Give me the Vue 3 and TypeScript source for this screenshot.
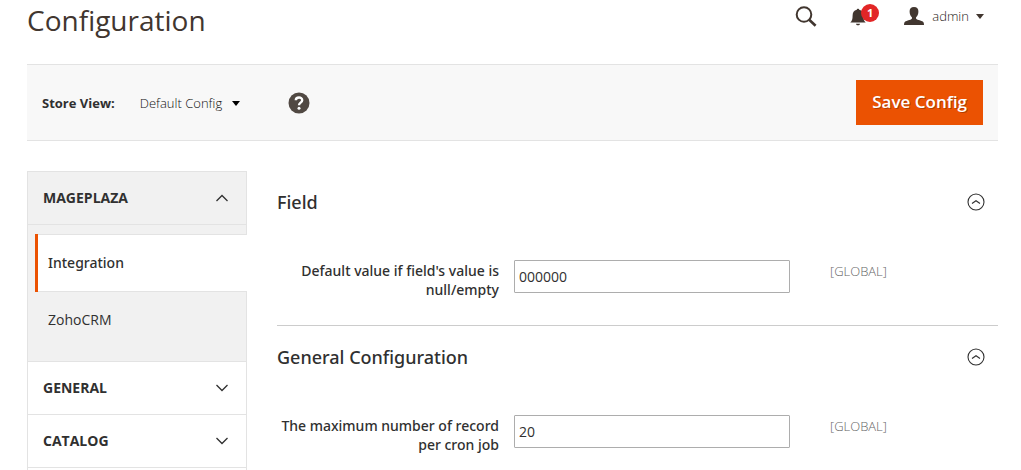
<script setup lang="ts">
import { ref } from 'vue'

interface ConfigSection {
  id: string
  title: string
  label: string
  scope: string
}

const sections: ConfigSection[] = [
  { id: 'field', title: 'Field', label: "Default value if field's value is null/empty", scope: '[GLOBAL]' },
  { id: 'general', title: 'General Configuration', label: 'The maximum number of record per cron job', scope: '[GLOBAL]' },
]

const values = ref<Record<string, string>>({ field: '000000', general: '20' })
const open = ref<Record<string, boolean>>({ field: true, general: true })
const mageplazaOpen = ref(true)
const otherGroups: string[] = ['General', 'Catalog']
</script>

<template>
  <div class="page">
    <header class="header">
      <h1 class="title">Configuration</h1>
      <div class="tools">
        <button type="button" class="icon-button" aria-label="Search">
          <svg class="search" viewBox="0 0 22 22" aria-hidden="true">
            <circle cx="9" cy="9.500" r="7.300" fill="none" stroke="#41362f" stroke-width="2" />
            <path d="M14.200 14.700 20.600 20.700" stroke="#41362f" stroke-width="2.600" />
          </svg>
        </button>
        <button type="button" class="icon-button notifications" aria-label="Notifications">
          <svg class="bell" viewBox="0 0 16 18" aria-hidden="true">
            <path d="M6.800 1.800C6.800.4 9.200.4 9.200 1.800c3 .7 4.200 2.900 4.200 5.900 0 3.300.5 5.200 2.300 6.800H.3c1.800-1.600 2.300-3.500 2.300-6.800 0-3 1.200-5.200 4.200-5.900zM6 15.800h4c-.2 2-3.800 2-4 0z" fill="#41362f" />
          </svg>
          <span class="badge">1</span>
        </button>
        <button type="button" class="account">
          <svg class="user" viewBox="0 0 20 18" aria-hidden="true">
            <path d="M10 0c3 0 4.600 2 4.400 4.800-.1 2.300-.9 4.300-2.300 5.500-.4 1.400.2 2 1.500 2.500 2.800.9 5.400 1.200 6 2.700.3.700.4 1.500.4 2.500H0c0-1 .1-1.800.4-2.500.6-1.500 3.200-1.800 6-2.700 1.300-.5 1.900-1.100 1.500-2.500C6.500 9.100 5.700 7.100 5.600 4.800 5.400 2 7 0 10 0z" fill="#41362f" />
          </svg>
          <span>admin</span>
          <svg class="caret" viewBox="0 0 8 5" aria-hidden="true"><path d="M0 0h8L4 5z" fill="#41362f" /></svg>
        </button>
      </div>
    </header>

    <div class="toolbar">
      <span class="store-label">Store View:</span>
      <button type="button" class="store-switch">
        <span>Default Config</span>
        <svg class="caret" viewBox="0 0 8 5" aria-hidden="true"><path d="M0 0h8L4 5z" fill="#000" /></svg>
      </button>
      <a href="#" class="help" aria-label="Help">
        <svg viewBox="0 0 22 22" aria-hidden="true">
          <circle cx="11" cy="11" r="10.500" fill="#514943" />
          <path d="M7.800 8.300C7.800 4.500 14.200 4.500 14.200 8.200c0 2.400-3.200 2.500-3.200 5" fill="none" stroke="#fff" stroke-width="2.400" />
          <circle cx="11" cy="16.300" r="1.500" fill="#fff" />
        </svg>
      </a>
      <button type="button" class="save">Save Config</button>
    </div>

    <div class="columns">
      <nav class="sidebar" aria-label="Configuration sections">
        <div class="group active">
          <button type="button" class="group-title" :aria-expanded="mageplazaOpen" @click="mageplazaOpen = !mageplazaOpen">
            <span>Mageplaza</span>
            <svg class="chevron" viewBox="0 0 14 8" aria-hidden="true"><path d="M1.500 7 7 1.500 12.500 7" /></svg>
          </button>
          <ul v-if="mageplazaOpen" class="links">
            <li><a href="#" class="link current">Integration</a></li>
            <li><a href="#" class="link">ZohoCRM</a></li>
          </ul>
        </div>
        <div v-for="name in otherGroups" :key="name" class="group">
          <button type="button" class="group-title" aria-expanded="false">
            <span>{{ name }}</span>
            <svg class="chevron" viewBox="0 0 14 8" aria-hidden="true"><path d="M1.500 1 7 6.500 12.500 1" /></svg>
          </button>
        </div>
      </nav>

      <main class="content">
        <section v-for="s in sections" :key="s.id" class="section">
          <button type="button" class="section-title" :aria-expanded="open[s.id]" @click="open[s.id] = !open[s.id]">
            <span>{{ s.title }}</span>
            <svg class="toggle" viewBox="0 0 18 18" aria-hidden="true">
              <circle cx="9" cy="9" r="8" />
              <path d="M5 10.500 9 7.700 13 10.500" />
            </svg>
          </button>
          <div v-if="open[s.id]" class="field">
            <label :for="s.id">{{ s.label }}</label>
            <input :id="s.id" v-model="values[s.id]" type="text" />
            <span class="scope">{{ s.scope }}</span>
          </div>
        </section>
      </main>
    </div>
  </div>
</template>

<style>
body {
  background: #fff;
}

html,
body {
  height: 100%;
  margin: 0;
}

#app {
  height: 100%;
}
</style>

<style scoped>
.page {
  display: flex;
  flex-direction: column;
  min-height: 100%;
  padding: 0 23px 0 27px;
  color: #303030;
  font-family: "Open Sans", "Noto Sans", sans-serif;
  font-size: 14px;
  line-height: 19px;
}

.page *,
.page {
  box-sizing: border-box;
}

button {
  padding: 0;
  border: 0;
  background: none;
  color: inherit;
  font: inherit;
  cursor: pointer;
}

a {
  color: inherit;
  text-decoration: none;
}

svg {
  display: block;
  flex: none;
}

.header {
  display: flex;
  justify-content: space-between;
  align-items: flex-start;
  height: 64px;
}

.title {
  margin: 0;
  color: #41362f;
  font-size: 28px;
  font-weight: 400;
  line-height: 40px;
}

.tools {
  display: flex;
  align-items: center;
  height: 32px;
  padding-right: 14px;
}

.search {
  width: 22px;
  height: 22px;
}

.notifications {
  position: relative;
  margin: 0 26px 0 33px;
  padding-right: 12px;
}

.bell {
  width: 16px;
  height: 18px;
  margin-top: 2px;
}

.badge {
  position: absolute;
  top: -2px;
  left: 11px;
  width: 18px;
  height: 18px;
  border-radius: 9px;
  background: #e22626;
  color: #fff;
  font-size: 11px;
  font-weight: 700;
  line-height: 18px;
  text-align: center;
}

.account {
  display: flex;
  align-items: center;
  color: #1f1a17;
  font-size: 13px;
  font-weight: 300;
}

.user {
  width: 20px;
  height: 18px;
  margin-right: 8px;
}

.caret {
  width: 8px;
  height: 5px;
  margin-left: 7px;
}

.toolbar {
  display: flex;
  align-items: center;
  min-height: 77px;
  padding: 0 15px;
  border-top: 1px solid #e3e3e3;
  border-bottom: 1px solid #e3e3e3;
  background: #f8f8f8;
  font-size: 13px;
}

.store-label {
  padding-top: 1px;
  color: #303030;
  font-weight: 700;
}

.store-switch {
  display: flex;
  align-items: center;
  margin: 0 48px 0 25px;
  padding-top: 2px;
  color: #111;
  font-weight: 300;
}

.store-switch .caret {
  margin-left: 10px;
}

.help svg {
  width: 22px;
  height: 22px;
}

.save {
  margin-left: auto;
  padding: 0 16px 2px;
  background: #eb5202;
  color: #fff;
  font-size: 17px;
  font-weight: 600;
  line-height: 43px;
  text-shadow: 1px 1px 0 rgba(0, 0, 0, 0.25);
}

.columns {
  display: grid;
  flex: 1;
  grid-template-columns: 220px minmax(0, 1fr);
  gap: 30px;
  margin-top: 30px;
}

.sidebar {
  border-top: 1px solid #e3e3e3;
  box-shadow: inset 1px 0 0 #e3e3e3, inset -1px 0 0 #e3e3e3;
}

.group {
  border: 1px solid #e3e3e3;
  border-top: 0;
}

.group.active {
  background: #f1f1f1;
}

.group-title {
  display: flex;
  justify-content: space-between;
  align-items: center;
  width: 100%;
  height: 52px;
  padding: 0 17px 1px 15px;
  font-weight: 700;
  text-transform: uppercase;
}

.active .group-title {
  height: 53px;
  border-bottom: 1px solid #e3e3e3;
}

.chevron {
  width: 14px;
  height: 8px;
}

.chevron path {
  fill: none;
  stroke: #303030;
  stroke-width: 1.3;
}

.links {
  margin: 0;
  padding: 9px 0 13px;
  list-style: none;
}

.link {
  display: block;
  padding: 18px 20px 19px;
}

.link.current {
  margin: 0 -1px 0 7px;
  padding: 19px 13px 20px;
  background: #fff;
  box-shadow: inset 3px 0 0 #eb5202, inset 0 1px 0 #e3e3e3, inset 0 -1px 0 #e3e3e3;
  font-family: "Noto Sans", "Open Sans", sans-serif;
  font-weight: 500;
}

.section + .section {
  border-top: 1px solid #ccc;
}

.section-title {
  display: flex;
  justify-content: space-between;
  align-items: center;
  width: 100%;
  height: 62px;
  padding-right: 13px;
  font-family: "Noto Sans", "Open Sans", sans-serif;
  font-size: 18px;
  font-weight: 500;
  text-align: left;
}

.toggle {
  width: 18px;
  height: 18px;
}

.toggle * {
  fill: none;
  stroke: #303030;
  stroke-width: 1.1;
}

.field {
  display: grid;
  grid-template-columns: 222px minmax(0, 1fr) 168px;
  align-items: start;
  padding: 27px 0 26px;
}

.field label {
  padding-top: 1px;
  font-family: "Noto Sans", "Open Sans", sans-serif;
  font-weight: 500;
  text-align: right;
}

.field input {
  height: 33px;
  margin: 0 40px 5px 15px;
  padding: 0 4px;
  border: 1px solid #adadad;
  border-radius: 1px;
  background: #fff;
  color: #303030;
  font: inherit;
}

.scope {
  padding-top: 2px;
  color: #666;
  font-size: 13px;
  font-weight: 300;
}
</style>
